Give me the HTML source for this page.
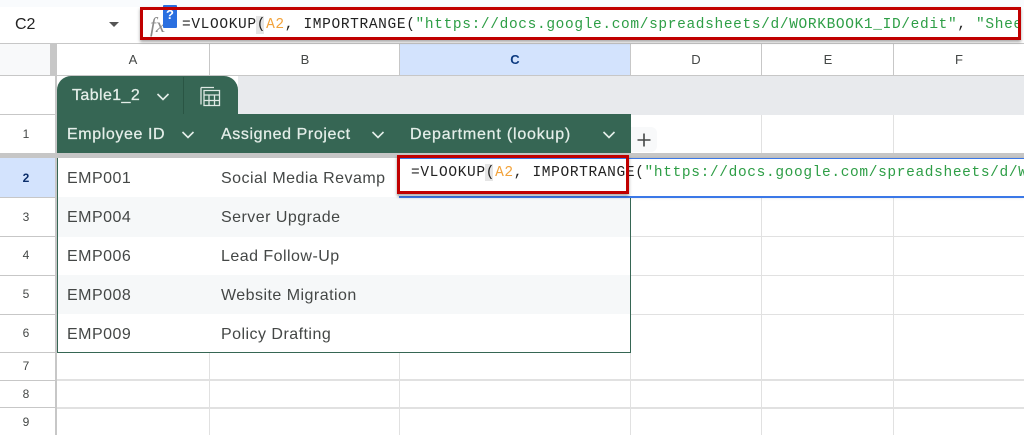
<!DOCTYPE html>
<html><head><meta charset="utf-8">
<style>
html,body{margin:0;padding:0;background:#fff}
#p{position:relative;width:1024px;height:435px;overflow:hidden;background:#fff;font-family:"Liberation Sans",sans-serif;color:#444746}
#p div,#p span.a{position:absolute}
.h{background:#c7c7c7}
.g{background:#e1e1e1}
.ch{top:52px;font-size:13px;line-height:16px;color:#444746;text-align:center;width:40px}
.rn{left:0;width:52px;text-align:center;font-size:12px;line-height:14px;color:#444746}
.t{font-size:16px;line-height:20px;color:#444746;white-space:nowrap;letter-spacing:.47px}
.th{font-size:16px;line-height:20px;color:#e4eee9;white-space:nowrap;top:125px;letter-spacing:.6px;-webkit-text-stroke:.25px #e4eee9}
.m{font-family:"Liberation Mono",monospace;font-size:14.5px;line-height:18px;letter-spacing:.64px;white-space:pre;color:#222}
.o{color:#f2a33c}.gr{color:#2e9e46}
</style></head><body><div id="p">

<div style="left:0;top:0;width:1024px;height:7px;background:#f9fbfd"></div>
<div style="left:0;top:43px;width:1024px;height:1px;background:#c7c7c7"></div>

<!-- name box -->
<div style="left:15px;top:16px;font-size:16px;line-height:18px;color:#222">C2</div>
<div style="left:109px;top:22px;width:0;height:0;border-left:5px solid transparent;border-right:5px solid transparent;border-top:5px solid #555"></div>

<!-- headers -->
<div style="left:0;top:44px;width:50px;height:31px;background:#f8f9fa"></div>
<div class="h" style="left:50px;top:44px;width:7px;height:31px"></div>
<div style="left:399px;top:44px;width:231px;height:31px;background:#d3e3fd"></div>
<div class="h" style="left:0;top:75px;width:1024px;height:1px"></div>
<div class="h" style="left:209px;top:44px;width:1px;height:31px"></div>
<div class="h" style="left:399px;top:44px;width:1px;height:31px"></div>
<div class="h" style="left:630px;top:44px;width:1px;height:31px"></div>
<div class="h" style="left:761px;top:44px;width:1px;height:31px"></div>
<div class="h" style="left:893px;top:44px;width:1px;height:31px"></div>
<div class="ch" style="left:113px">A</div>
<div class="ch" style="left:285px">B</div>
<div class="ch" style="left:495px;color:#0b3a80;font-weight:bold">C</div>
<div class="ch" style="left:676px">D</div>
<div class="ch" style="left:808px">E</div>
<div class="ch" style="left:939px">F</div>

<!-- grid lines right of the table -->
<div class="g" style="left:238px;top:76px;width:786px;height:39px;background:#e8eaed"></div>
<div class="g" style="left:761px;top:115px;width:1px;height:320px"></div>
<div class="g" style="left:893px;top:115px;width:1px;height:320px"></div>
<div class="g" style="left:630px;top:197px;width:394px;height:1px"></div>
<div class="g" style="left:630px;top:236px;width:394px;height:1px"></div>
<div class="g" style="left:630px;top:275px;width:394px;height:1px"></div>
<div class="g" style="left:630px;top:314px;width:394px;height:1px"></div>
<div class="g" style="left:57px;top:379px;width:967px;height:2px"></div>
<div class="g" style="left:57px;top:407px;width:967px;height:2px"></div>
<div class="g" style="left:209px;top:353px;width:1px;height:82px"></div>
<div class="g" style="left:399px;top:353px;width:1px;height:82px"></div>
<div class="g" style="left:630px;top:353px;width:1px;height:82px"></div>

<!-- row header -->
<div class="h" style="left:55px;top:76px;width:2px;height:359px"></div>
<div class="h" style="left:0;top:114px;width:57px;height:1px"></div>
<div style="left:0;top:158px;width:55px;height:39px;background:#d3e3fd"></div>
<div class="h" style="left:0;top:197px;width:57px;height:1px"></div>
<div class="h" style="left:0;top:236px;width:57px;height:1px"></div>
<div class="h" style="left:0;top:275px;width:57px;height:1px"></div>
<div class="h" style="left:0;top:314px;width:57px;height:1px"></div>
<div class="h" style="left:0;top:352px;width:57px;height:1px"></div>
<div class="h" style="left:0;top:380px;width:57px;height:1px"></div>
<div class="h" style="left:0;top:407px;width:57px;height:1px"></div>
<div class="rn" style="top:127px">1</div>
<div class="rn" style="top:171px;color:#0b2e6b;font-weight:bold">2</div>
<div class="rn" style="top:210px">3</div>
<div class="rn" style="top:248px">4</div>
<div class="rn" style="top:287px">5</div>
<div class="rn" style="top:326px">6</div>
<div class="rn" style="top:359px">7</div>
<div class="rn" style="top:387px">8</div>
<div class="rn" style="top:415px">9</div>

<!-- table -->
<div style="left:57px;top:76px;width:181px;height:39px;background:#366654;border-radius:14px 14px 0 0"></div>
<div style="left:183px;top:77px;width:1px;height:38px;background:#2a5544"></div>
<div style="left:72px;top:86px;font-size:16px;line-height:20px;color:#e4eee9;letter-spacing:.4px;-webkit-text-stroke:.25px #e4eee9">Table1_2</div>
<svg style="position:absolute;left:156px;top:92px" width="14" height="10"><path d="M1.5 2 L7 7.5 L12.5 2" fill="none" stroke="#e4eee9" stroke-width="1.6"/></svg>
<svg style="position:absolute;left:199px;top:85px" width="24" height="24" fill="none" stroke="#dfe9e4" stroke-width="1.3"><path d="M2 2.5H15M2 2.5V19.5"/><path d="M5 5.5H20.5V20.5H5Z"/><path d="M5 10H20.5M5 15.5H20.5M10 10V20.5M15.5 10V20.5"/></svg>

<div style="left:57px;top:114px;width:574px;height:39px;background:#366654"></div>
<div class="th" style="left:67px">Employee ID</div>
<div class="th" style="left:221px">Assigned Project</div>
<div class="th" style="left:410px;letter-spacing:.8px">Department (lookup)</div>
<svg style="position:absolute;left:181px;top:130px" width="14" height="10"><path d="M1.5 2 L7 7.5 L12.5 2" fill="none" stroke="#e4eee9" stroke-width="1.6"/></svg>
<svg style="position:absolute;left:371px;top:130px" width="14" height="10"><path d="M1.5 2 L7 7.5 L12.5 2" fill="none" stroke="#e4eee9" stroke-width="1.6"/></svg>
<svg style="position:absolute;left:602px;top:130px" width="14" height="10"><path d="M1.5 2 L7 7.5 L12.5 2" fill="none" stroke="#e4eee9" stroke-width="1.6"/></svg>

<!-- plus -->
<div style="left:631px;top:127px;width:26px;height:25px;background:#f8f9fa;border-radius:0 6px 6px 0"></div>
<svg style="position:absolute;left:636px;top:132px" width="16" height="16"><path d="M8 1.5V14.5M1.5 8H14.5" stroke="#444746" stroke-width="1.6"/></svg>

<!-- freeze bar -->
<div style="left:0;top:153px;width:1024px;height:5px;background:#c6c6c6"></div>

<!-- body -->
<div style="left:58px;top:197px;width:572px;height:40px;background:#f6f8f9"></div>
<div style="left:58px;top:275px;width:572px;height:39px;background:#f6f8f9"></div>
<div style="left:57px;top:158px;width:1px;height:195px;background:#366654"></div>
<div style="left:630px;top:158px;width:1px;height:195px;background:#366654"></div>
<div style="left:57px;top:352px;width:574px;height:1px;background:#366654"></div>

<div class="t" style="left:67px;top:169px">EMP001</div>
<div class="t" style="left:67px;top:208px">EMP004</div>
<div class="t" style="left:67px;top:247px">EMP006</div>
<div class="t" style="left:67px;top:286px">EMP008</div>
<div class="t" style="left:67px;top:325px">EMP009</div>
<div class="t" style="left:221px;top:169px">Social Media Revamp</div>
<div class="t" style="left:221px;top:208px">Server Upgrade</div>
<div class="t" style="left:221px;top:247px">Lead Follow-Up</div>
<div class="t" style="left:221px;top:286px">Website Migration</div>
<div class="t" style="left:221px;top:325px">Policy Drafting</div>

<!-- editing cell -->
<div style="left:399px;top:158px;width:625px;height:38px;background:#fff;box-shadow:0 1px 3px rgba(0,0,0,.25)"></div>
<div style="left:399px;top:158px;width:625px;height:1px;background:#3b78e7"></div>
<div style="left:399px;top:196px;width:625px;height:2px;background:#3b78e7"></div>
<div class="m" style="left:411px;top:164px">=VLOOKUP(<span class="o">A2</span>, IMPORTRANGE(<span class="gr">"https://docs.google.com/spreadsheets/d/WORKBOOK1_ID/edit"</span></div>
<div style="left:485px;top:164px;width:8px;height:17px;background:rgba(0,0,0,.1)"></div>
<div style="left:397px;top:155px;width:226px;height:33px;border:3px solid #c00000;box-shadow:0 2px 3px rgba(0,0,0,.35)"></div>

<!-- formula bar -->
<div style="left:143px;top:10px;width:875px;height:27px;background:#fff"></div>
<div style="left:150px;top:13px;font-family:'Liberation Serif',serif;font-style:italic;font-size:21px;line-height:24px;color:#8a8a8a">fx</div>
<div style="left:163px;top:5px;width:14px;height:23px;background:#2a6fe0;border-radius:1px;color:#fff;font-size:13px;font-weight:bold;line-height:20px;text-align:center">?</div>
<div class="m" style="left:182px;top:16px;width:836px;overflow:hidden">=VLOOKUP(<span class="o">A2</span>, IMPORTRANGE(<span class="gr">"https://docs.google.com/spreadsheets/d/WORKBOOK1_ID/edit"</span>, <span class="gr">"Sheet1"</span></div>
<div style="left:256px;top:16px;width:8px;height:18px;background:rgba(0,0,0,.1)"></div>
<div style="left:140px;top:7px;width:875px;height:27px;border:3px solid #c00000;box-shadow:0 2px 3px rgba(0,0,0,.35)"></div>

</div></body></html>
